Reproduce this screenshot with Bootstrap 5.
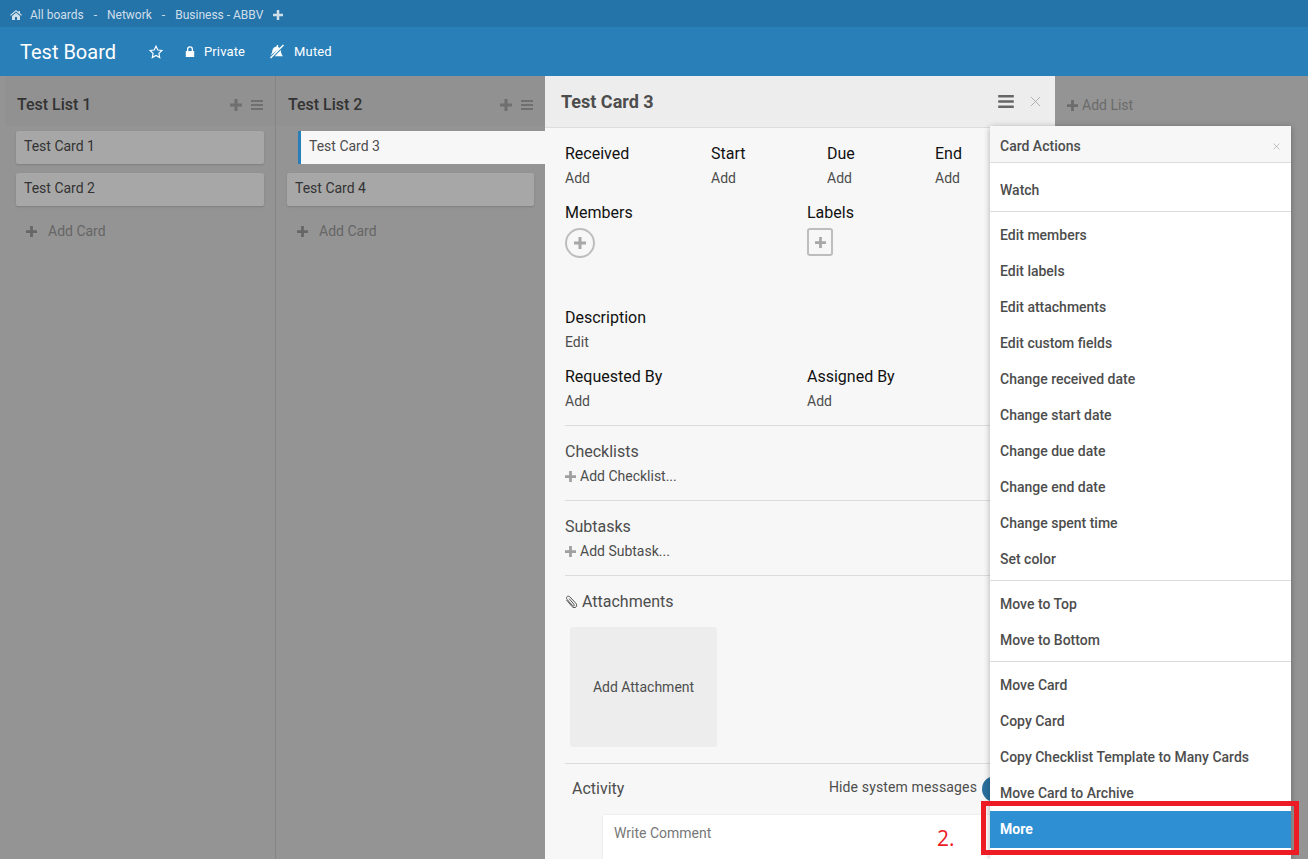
<!DOCTYPE html>
<html lang="en">
<head>
<meta charset="utf-8">
<title>Test Board</title>
<link href="https://cdn.jsdelivr.net/npm/bootstrap@5.3.0/dist/css/bootstrap.min.css" rel="stylesheet">
<style>
html,body{height:100%;overflow:hidden}
body{font-family:Roboto,"Liberation Sans",sans-serif;font-size:14px;color:#4d4d4d;background:#949494;position:relative;width:1308px;height:859px}
.tb{height:27px;background:#2574a9;color:#cfdfea;font-size:12px;padding:2px 0 0 10px}
.tb span.sep{margin:0 10px}
.hd{height:49px;background:#2980b9;color:#fff;padding-left:20px}
.hd h1{font-size:20px;font-weight:400;margin:0 32px 0 0;width:97px;white-space:nowrap}
.hd .it{font-size:13px;letter-spacing:.01em}
.board{height:783px}
.lst{width:269px;background:#949494;flex:none}
.lst.one{width:276px;padding-left:5px;border-right:1px solid #858585}
.lh{height:50px;background:#919191;padding:8px 12px 0 12px}
.lh b{font-size:16px;font-weight:500;color:#333}
.c{height:33px;margin:5px 11px 9px 11px;background:#a7a7a7;border-radius:2px;box-shadow:0 1px 2px rgba(0,0,0,.15);padding:7px 8px;color:#333;line-height:17px}
.c.on{margin:5px 0 9px 22px;background:#f7f7f7;border-left:3px solid #2980b9;border-radius:0;padding-left:8px;color:#4d4d4d;box-shadow:none}
.ac{color:#666;padding:8px 20px 8px 21px;height:32px;line-height:16px;gap:11px}
.det{width:510px;flex:none;background:#f7f7f7;height:783px;overflow:hidden}
.dh{height:52px;background:#ededed;border-bottom:1px solid #dcdcdc;padding:0 10px 0 16px}
.dh b{font-size:18px;font-weight:700;color:#4d4d4d}
.db{padding:0 20px}
.lb{color:#111;font-size:16px;line-height:20px}
.ad{line-height:20px;margin-top:4px;color:#4d4d4d}
.dg{display:grid;grid-template-columns:146px 116px 108px 1fr;padding-top:16px}
.mm{padding-top:15px;display:grid;grid-template-columns:242px 1fr}
.mm.tall{height:100px}
.circ{width:30px;height:30px;border:2px solid #bdbdbd;border-radius:50%;margin-top:5px;color:#a8a8a8}
.squ{width:26px;height:28px;border:2px solid #bdbdbd;border-radius:3px;margin-top:5px;color:#a8a8a8}
.sec{font-size:16px;line-height:20px;color:#4d4d4d}
.rule{border-top:1px solid #dcdcdc;margin:0;opacity:1}
.rule.r1{margin-top:14px}
.rule.r2{margin-top:16px}
.blk{padding:16px 0 14px}
.pi{color:#a0a0a0}
.att{width:147px;height:120px;background:#ededed;border-radius:3px;margin:15px 0 0 5px}
.cbox{width:420px;height:60px;background:#fff;margin:1px 0 0 38px;padding:8px 11px;color:#777;box-shadow:0 0 2px rgba(0,0,0,.1)}
.acthd{height:50px;padding-left:7px}
.hide{letter-spacing:.01em;margin-bottom:3px}
.sw{width:26px;height:26px;background:#2a6f9e;border-radius:50%;flex:none;margin-left:5px;margin-right:27px}
.addl{color:#6b6b6b;padding-left:12px;height:58px}
.tools{color:#6f6f6f;gap:9px}
.menu{position:absolute;left:990px;top:126px;width:301px;height:733px;background:#fff;box-shadow:0 1px 6px rgba(0,0,0,.3);border-radius:2px 2px 0 0;font-weight:500;color:#4d4d4d}
.mh{height:37px;background:#f7f7f7;border-bottom:1px solid #dcdcdc;padding:4px 11px 0 10px;font-weight:500}
.mg{border-bottom:1px solid #dcdcdc;padding:5px 0 3px}
.mg.first{padding-top:9px}
.mg.nb{border:0;padding-bottom:0}
.mi{height:36px;line-height:36px;padding:0 10px;white-space:nowrap}
.mi.act{background:#2e8fd3;color:#fff;font-weight:700;height:37px}
.x-sm{color:#999}
.red{position:absolute;left:981px;top:801px;width:318px;height:54px;border:5px solid #ed1c24;pointer-events:none}
.two-n{position:absolute;left:937px;top:826px;color:#ed1c24;font-size:21px;line-height:24px;font-family:"Open Sans",sans-serif}
svg{display:block;flex:none}
</style>
</head>
<body>
<svg width="0" height="0" class="position-absolute">
<defs>
<symbol id="plus" viewBox="0 0 12 12"><path d="M4.500 0h3v4.500H12v3H7.500V12h-3V7.500H0v-3h4.500z" fill="currentColor"/></symbol>
<symbol id="bars" viewBox="0 0 12 10"><path d="M0 0h12v2H0zM0 4h12v2H0zM0 8h12v2H0z" fill="currentColor"/></symbol>
<symbol id="x" viewBox="0 0 12 12"><path d="M1 1l10 10M11 1L1 11" stroke="currentColor" stroke-width="1" fill="none"/></symbol>
</defs>
</svg>
<div class="tb d-flex align-items-center">
<svg width="12" height="10" viewBox="0 0 12 10" class="me-2"><path d="M6 0 0 5l.7.800L6 1.500l5.300 4.300.7-.8-2-1.700V1H8.500v1L6 0zM2 6v4h3V7h2v3h3V6L6 2.800z" fill="currentColor"/></svg>
<span>All boards</span><span class="sep">-</span><span>Network</span><span class="sep">-</span><span>Business - ABBV</span>
<svg width="10" height="10" style="margin-left:10px"><use href="#plus"/></svg>
</div>
<div class="hd d-flex align-items-center">
<h1>Test Board</h1>
<svg width="14" height="14" viewBox="0 0 14 14"><path d="M7 1.200l1.800 3.800 4.100.5-3 2.900.8 4.100L7 10.500l-3.700 2 .8-4.100-3-2.900 4.100-.5z" fill="none" stroke="#fff" stroke-width="1.200"/></svg>
<svg width="10" height="11" viewBox="0 0 10 11" style="margin-left:22px"><path d="M2 5V3.200a3 3 0 016 0V5h1.200v6H.8V5zm1.300 0h3.400V3.200a1.700 1.700 0 00-3.400 0z" fill="#fff"/></svg>
<span class="it" style="margin-left:9px">Private</span>
<svg width="17" height="15" viewBox="0 0 17 15" style="margin-left:23px"><path d="M1 12.500c2-1.300 3-3.200 3.300-5.500.3-2.600 2-4.300 4.200-4.500L9 .8l1.300.5-.3 1.600c.8.300 1.400.7 1.900 1.300zM12.800 6c0 2.600.8 4.600 2.200 6.300H6.700z" fill="#fff"/><path d="M15.500 1 2.500 14" stroke="#fff" stroke-width="1.400"/></svg>
<span class="it" style="margin-left:9px">Muted</span>
</div>
<div class="board d-flex">
<div class="lst one">
<div class="lh d-flex align-items-center justify-content-between"><b>Test List 1</b><span class="tools d-flex align-items-center"><svg width="12" height="12"><use href="#plus"/></svg><svg width="12" height="10"><use href="#bars"/></svg></span></div>
<div class="c">Test Card 1</div>
<div class="c">Test Card 2</div>
<div class="ac d-flex align-items-center"><svg width="11" height="11"><use href="#plus"/></svg><span>Add Card</span></div>
</div>
<div class="lst">
<div class="lh d-flex align-items-center justify-content-between"><b>Test List 2</b><span class="tools d-flex align-items-center"><svg width="12" height="12"><use href="#plus"/></svg><svg width="12" height="10"><use href="#bars"/></svg></span></div>
<div class="c on">Test Card 3</div>
<div class="c">Test Card 4</div>
<div class="ac d-flex align-items-center"><svg width="11" height="11"><use href="#plus"/></svg><span>Add Card</span></div>
</div>
<div class="det">
<div class="dh d-flex align-items-center"><b class="me-auto">Test Card 3</b><svg width="16" height="13" class="me-3" style="color:#666"><use href="#bars"/></svg><svg width="11" height="11" style="color:#aaa" class="me-1"><use href="#x"/></svg></div>
<div class="db">
<div class="dg"><div><div class="lb">Received</div><div class="ad">Add</div></div><div><div class="lb">Start</div><div class="ad">Add</div></div><div><div class="lb">Due</div><div class="ad">Add</div></div><div><div class="lb">End</div><div class="ad">Add</div></div></div>
<div class="mm tall"><div><div class="lb">Members</div><div class="circ d-flex align-items-center justify-content-center"><svg width="12" height="12"><use href="#plus"/></svg></div></div><div><div class="lb">Labels</div><div class="squ d-flex align-items-center justify-content-center"><svg width="11" height="11"><use href="#plus"/></svg></div></div></div>
<div class="pt-3 mt-1"><div class="lb">Description</div><div class="ad">Edit</div></div>
<div class="mm"><div><div class="lb">Requested By</div><div class="ad">Add</div></div><div><div class="lb">Assigned By</div><div class="ad">Add</div></div></div>
<hr class="rule r1">
<div class="blk"><div class="sec">Checklists</div><div class="ad d-flex align-items-center gap-1"><svg class="pi" width="11" height="11"><use href="#plus"/></svg>Add Checklist...</div></div>
<hr class="rule">
<div class="blk"><div class="sec">Subtasks</div><div class="ad d-flex align-items-center gap-1"><svg class="pi" width="11" height="11"><use href="#plus"/></svg>Add Subtask...</div></div>
<hr class="rule">
<div class="sec d-flex align-items-center gap-1 pt-3"><svg width="13" height="14" viewBox="0 0 13 14"><path d="M1.500 5 7 11.500c1 1.200 3 1.500 4 .5s.8-2.700-.2-3.800L5 2C4 1 2.700 1 2 1.700S1.300 3.500 2.200 4.500l5.300 6c.5.600 1.200.700 1.600.3s.3-1-.2-1.600L4.200 3.700" fill="none" stroke="#555" stroke-width="1"/></svg>Attachments</div>
<div class="att d-flex align-items-center justify-content-center">Add Attachment</div>
<hr class="rule r2">
<div class="acthd d-flex align-items-center"><span class="sec me-auto">Activity</span><span class="hide">Hide system messages</span><span class="sw"></span></div>
<div class="cbox">Write Comment</div>
</div>
</div>
<div class="addl d-flex align-items-center gap-1 flex-grow-1 align-self-start"><svg width="11" height="11"><use href="#plus"/></svg>Add List</div>
</div>
<div class="menu">
<div class="mh d-flex align-items-center justify-content-between"><span>Card Actions</span><svg class="x-sm" width="7" height="7"><use href="#x"/></svg></div>
<div class="mg first"><div class="mi">Watch</div></div>
<div class="mg"><div class="mi">Edit members</div><div class="mi">Edit labels</div><div class="mi">Edit attachments</div><div class="mi">Edit custom fields</div><div class="mi">Change received date</div><div class="mi">Change start date</div><div class="mi">Change due date</div><div class="mi">Change end date</div><div class="mi">Change spent time</div><div class="mi">Set color</div></div>
<div class="mg"><div class="mi">Move to Top</div><div class="mi">Move to Bottom</div></div>
<div class="mg nb"><div class="mi">Move Card</div><div class="mi">Copy Card</div><div class="mi">Copy Checklist Template to Many Cards</div><div class="mi">Move Card to Archive</div><div class="mi act">More</div></div>
</div>
<div class="red"></div>
<div class="two-n">2.</div>
<script src="https://cdn.jsdelivr.net/npm/bootstrap@5.3.0/dist/js/bootstrap.bundle.min.js"></script>
</body>
</html>
